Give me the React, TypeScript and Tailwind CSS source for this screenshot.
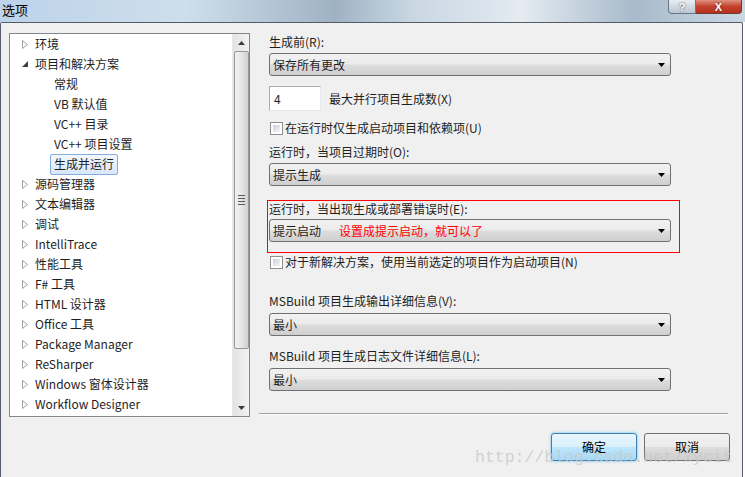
import React from 'react';

const font = "font-['Noto_Sans_CJK_SC',sans-serif]";

const Arrow = ({ open }: { open?: boolean }) =>
    open ? (
        <svg width="6" height="6" viewBox="0 0 6 6" className="shrink-0">
            <path d="M6 0 L6 6 L0 6 Z" fill="#404040" />
        </svg>
    ) : (
        <svg width="6" height="9" viewBox="0 0 6 9" className="shrink-0">
            <path d="M0.5 0.5 L5.5 4.5 L0.5 8.5 Z" fill="white" stroke="#a0a0a0" strokeWidth="1" />
        </svg>
    );

const TreeRow = ({ label, open, child, selected }: { label: string; open?: boolean; child?: boolean; selected?: boolean }) => (
    <div className="h-5 flex items-center">
        {child ? (
            <div className="w-[44px] shrink-0" />
        ) : (
            <div className="w-[25px] shrink-0 flex justify-start pl-[12px]">
                <Arrow open={open} />
            </div>
        )}
        <span
            className={
                selected
                    ? 'h-[21px] px-[3px] -ml-[4px] flex items-center border border-[#84acdd] rounded-[2px] bg-[linear-gradient(#f2f8fe,#d7e7fa)]'
                    : ''
            }
        >
            {label}
        </span>
    </div>
);

const Combo = ({ value, note }: { value: string; note?: string }) => (
    <div className="h-[23px] w-[402px] border border-[#707070] rounded-[3px] bg-[linear-gradient(#f2f2f2_0%,#ebebeb_48%,#dddddd_52%,#cfcfcf_100%)] flex items-center pl-[3px] pr-[5px]">
        <span>{value}</span>
        {note && <span className="ml-[18px] text-[#ff0000]">{note}</span>}
        <div className="flex-1" />
        <svg width="7" height="4" viewBox="0 0 7 4">
            <path d="M0 0 L7 0 L3.5 4 Z" fill="#000" />
        </svg>
    </div>
);

const Check = ({ label }: { label: string }) => (
    <div className="h-4 flex items-center">
        <div className="w-[13px] h-[13px] ml-[1px] border border-[#8e8f8f] bg-white p-[2px]">
            <div className="w-full h-full bg-[linear-gradient(135deg,#cbcfd5,#f6f6f6)]" />
        </div>
        <span className="ml-[2px]">{label}</span>
    </div>
);

const Label = ({ text }: { text: string }) => <div className="h-4 flex items-center">{text}</div>;

export default function App() {
    const tree: { label: string; open?: boolean; child?: boolean; selected?: boolean }[] = [
        { label: '环境' },
        { label: '项目和解决方案', open: true },
        { label: '常规', child: true },
        { label: 'VB 默认值', child: true },
        { label: 'VC++ 目录', child: true },
        { label: 'VC++ 项目设置', child: true },
        { label: '生成并运行', child: true, selected: true },
        { label: '源码管理器' },
        { label: '文本编辑器' },
        { label: '调试' },
        { label: 'IntelliTrace' },
        { label: '性能工具' },
        { label: 'F# 工具' },
        { label: 'HTML 设计器' },
        { label: 'Office 工具' },
        { label: 'Package Manager' },
        { label: 'ReSharper' },
        { label: 'Windows 窗体设计器' },
        { label: 'Workflow Designer' },
    ];

    return (
        <div className={`w-[745px] h-[477px] flex flex-col overflow-hidden text-[12px] leading-4 text-[#1e1e1e] ${font}`}>
            {/* title bar */}
            <div className="h-[22px] flex items-start bg-[linear-gradient(90deg,#bcd3ea_0%,#cfdeec_25%,#9fb2c4_45%,#c8d6e2_55%,#e4ebf1_70%,#a8bacb_85%,#cbd8e4_100%)]">
                <span className="mt-[2px] ml-[2px] text-[13px] text-black">选项</span>
                <div className="flex-1" />
                <div className="h-[14px] w-[28px] border border-t-0 border-[#6a7787] rounded-bl-[4px] bg-[linear-gradient(#e8eef4,#b9c6d3)] flex items-center justify-center overflow-hidden">
                    <span className="text-[11px] leading-[12px] font-bold text-white font-['Liberation_Sans',sans-serif] [text-shadow:0_0_2px_#333]">?</span>
                </div>
                <div className="h-[14px] w-[46px] mr-[3px] border border-t-0 border-l-0 border-[#6a3a32] rounded-br-[4px] bg-[linear-gradient(#e0917f,#c2412c_50%,#b8321d)] flex items-center justify-center overflow-hidden">
                    <span className="text-[11px] leading-[12px] font-bold text-white font-['Liberation_Sans',sans-serif] [text-shadow:0_0_2px_#5a1a10]">X</span>
                </div>
            </div>

            {/* body */}
            <div className="relative flex-1 bg-[#f0f0f0] border-t border-l border-r border-[#555e68] rounded-t-[2px] mr-[2px] flex flex-col">
                <div className="flex">
                    {/* tree panel */}
                    <div className="ml-[8px] mt-[10px] w-[241px] h-[384px] border border-[#828790] bg-white flex">
                        <div className="flex-1 flex flex-col">
                            {tree.map((t) => (
                                <TreeRow key={t.label} {...t} />
                            ))}
                        </div>
                        {/* scrollbar */}
                        <div className="w-[17px] bg-[linear-gradient(90deg,#e3e3e3,#f2f2f2)] border-l border-[#e8e8e8] flex flex-col items-center">
                            <div className="h-[17px] flex items-center justify-center">
                                <svg width="7" height="4" viewBox="0 0 7 4">
                                    <path d="M0 4 L7 4 L3.5 0 Z" fill="#3c3c3c" />
                                </svg>
                            </div>
                            <div className="w-[15px] h-[298px] border border-[#979797] rounded-[2px] bg-[linear-gradient(90deg,#f0f0f0,#e6e6e6_50%,#d0d0d0)] flex flex-col items-center justify-center gap-[2px]">
                                <div className="w-[7px] h-px bg-[#5a5a5a]" />
                                <div className="w-[7px] h-px bg-[#5a5a5a]" />
                                <div className="w-[7px] h-px bg-[#5a5a5a]" />
                                <div className="w-[7px] h-px bg-[#5a5a5a]" />
                            </div>
                            <div className="flex-1" />
                            <div className="h-[17px] flex items-center justify-center">
                                <svg width="7" height="4" viewBox="0 0 7 4">
                                    <path d="M0 0 L7 0 L3.5 4 Z" fill="#3c3c3c" />
                                </svg>
                            </div>
                        </div>
                    </div>

                    {/* settings */}
                    <div className="ml-[19px] mt-[11px] flex flex-col">
                        <Label text="生成前(R):" />
                        <div className="mt-[3px]">
                            <Combo value="保存所有更改" />
                        </div>
                        <div className="mt-[10px] flex items-center">
                            <div className="w-[52px] h-[25px] bg-white border border-[#abadb3] border-r-[#e3e9ef] border-b-[#e3e9ef] pl-[4px] flex items-center">
                                4
                            </div>
                            <span className="ml-[8px]">最大并行项目生成数(X)</span>
                        </div>
                        <div className="mt-[9px]">
                            <Check label="在运行时仅生成启动项目和依赖项(U)" />
                        </div>
                        <div className="mt-[8px]">
                            <Label text="运行时，当项目过期时(O):" />
                        </div>
                        <div className="mt-[3px]">
                            <Combo value="提示生成" />
                        </div>
                        <div className="mt-[14px] -ml-[2px] w-[413px] border border-[#ff0000] pl-[1px] pb-[10px]">
                            <Label text="运行时，当出现生成或部署错误时(E):" />
                            <div className="mt-[2px]">
                                <Combo value="提示启动" note="设置成提示启动，就可以了" />
                            </div>
                        </div>
                        <div className="mt-[1px]">
                            <Check label="对于新解决方案，使用当前选定的项目作为启动项目(N)" />
                        </div>
                        <div className="mt-[23px]">
                            <Label text="MSBuild 项目生成输出详细信息(V):" />
                        </div>
                        <div className="mt-[4px]">
                            <Combo value="最小" />
                        </div>
                        <div className="mt-[12px]">
                            <Label text="MSBuild 项目生成日志文件详细信息(L):" />
                        </div>
                        <div className="mt-[4px]">
                            <Combo value="最小" />
                        </div>
                        <div className="mt-[22px] -ml-[10px] w-[469px] h-px bg-[#a0a0a0] border-b border-white box-content" />
                    </div>
                </div>

                {/* buttons */}
                <div className="mt-[16px] flex justify-end gap-[7px] pr-[12px]">
                    <button className="w-[86px] h-[28px] border border-[#3c7fb1] rounded-[3px] bg-[linear-gradient(#eaf6fd_0%,#d9f0fc_48%,#bee6fd_52%,#a7d9f5_100%)] shadow-[0_0_3px_#5fc3f5] flex items-center justify-center text-black">
                        确定
                    </button>
                    <button className="w-[86px] h-[28px] border border-[#707070] rounded-[3px] bg-[linear-gradient(#f2f2f2_0%,#ebebeb_48%,#dddddd_52%,#cfcfcf_100%)] flex items-center justify-center text-black">
                        取消
                    </button>
                </div>

                {/* watermark */}
                <div className="absolute left-[474px] top-[425px] text-[16.5px] leading-5 text-[#c9c9c9]/80 font-['Liberation_Mono',monospace] pointer-events-none">
                    http://blog.csdn.net/xycit
                </div>
            </div>
        </div>
    );
}
